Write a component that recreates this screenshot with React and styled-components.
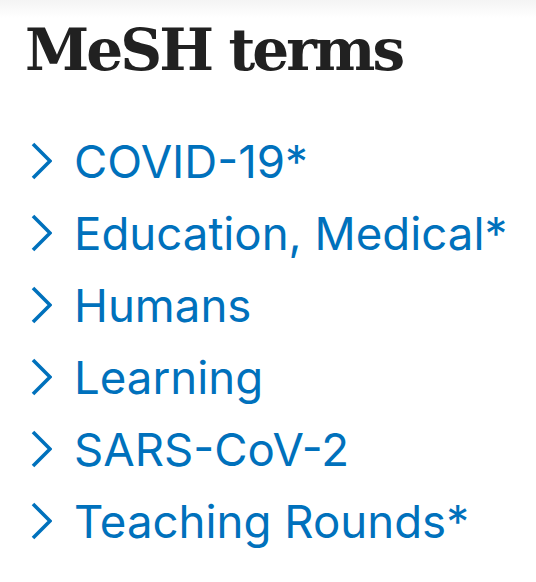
import React from "react";
import styled, { createGlobalStyle } from "styled-components";

const Global = createGlobalStyle`
  html, body { margin: 0; padding: 0; background: #fff; }
  body { width: 536px; height: 582px; overflow: hidden; }
`;

const Panel = styled.section`
  box-sizing: border-box;
  width: 536px;
  height: 582px;
  padding: 15px 0 0 25px;
  background: linear-gradient(to bottom, #f4f4f4 0px, #ffffff 18px);
`;

const Title = styled.h2`
  margin: 0;
  font-family: "DejaVu Serif", "Liberation Serif", serif;
  font-weight: 700;
  font-size: 58px;
  line-height: 70px;
  color: #212121;
  letter-spacing: -2.9px;
`;

const List = styled.ul`
  list-style: none;
  margin: 40px 0 0 0;
  padding: 0;
`;

const Item = styled.li`
  display: flex;
  align-items: center;
  height: 72px;
`;

const Link = styled.a`
  display: flex;
  align-items: center;
  font-family: Inter, "Noto Sans", sans-serif;
  font-size: 45.6px;
  color: #0071bc;
  text-decoration: none;
`;

const Chevron = styled.svg`
  width: 27px;
  height: 40px;
  margin-right: 22px;
  flex: none;
`;

const terms = [
  "COVID-19*",
  "Education, Medical*",
  "Humans",
  "Learning",
  "SARS-CoV-2",
  "Teaching Rounds*",
];

export default function App() {
  return (
    <>
      <Global />
      <Panel>
        <Title>MeSH terms</Title>
        <List>
          {terms.map((t) => (
            <Item key={t}>
              <Link href="#">
                <Chevron viewBox="0 0 27 40">
                  <path d="M8 3 L25 20 L8 37" fill="none" stroke="#0071bc" strokeWidth="3.6" />
                </Chevron>
                {t}
              </Link>
            </Item>
          ))}
        </List>
      </Panel>
    </>
  );
}
